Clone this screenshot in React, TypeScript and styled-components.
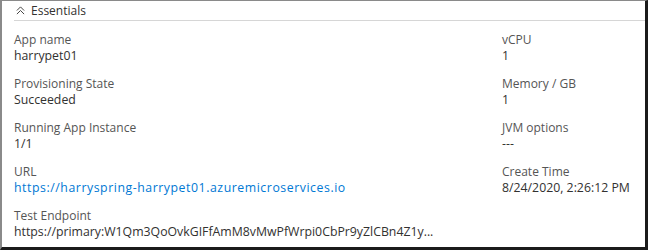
import React from "react";
import styled, { createGlobalStyle } from "styled-components";

const GlobalStyle = createGlobalStyle`
  html, body {
    margin: 0;
    padding: 0;
    background: #ffffff;
  }
  body {
    font-family: "Open Sans", "Noto Sans", "Liberation Sans", sans-serif;
  }
`;

const Panel = styled.div`
  box-sizing: border-box;
  width: 648px;
  height: 250px;
  border-top: 1px solid #8a8a8a;
  border-left: 2px solid #8a8a8a;
  border-right: 3px solid #1b1b1b;
  border-bottom: 3px solid #1b1b1b;
  background: #fff;
  overflow: hidden;
`;

const Header = styled.button`
  display: flex;
  align-items: center;
  gap: 6px;
  width: calc(100% - 12px);
  margin-left: 12px;
  height: 20px;
  padding: 0;
  background: none;
  border: none;
  border-bottom: 1px solid #d6d6d6;
  font: inherit;
  font-size: 12px;
  color: #323130;
  cursor: pointer;
  text-align: left;
`;

const Chevron = styled.svg`
  width: 9px;
  height: 9px;
  margin-left: 2px;
  flex: none;
`;

const Grid = styled.div`
  display: grid;
  grid-template-columns: 488px 1fr;
  padding: 11px 0 0 12px;
`;

const Column = styled.div`
  display: flex;
  flex-direction: column;
  gap: 12px;
`;

const Field = styled.div`
  display: flex;
  flex-direction: column;
`;

const Label = styled.div`
  font-size: 12px;
  line-height: 16px;
  color: #555555;
  white-space: nowrap;
`;

const Value = styled.div<{ $link?: boolean }>`
  font-size: 12.3px;
  line-height: 16px;
  color: ${(p) => (p.$link ? "#0078d4" : "#323130")};
  letter-spacing: ${(p) => (p.$link ? "0.55px" : "0")};
  white-space: nowrap;
`;

const left = [
  { label: "App name", value: "harrypet01" },
  { label: "Provisioning State", value: "Succeeded" },
  { label: "Running App Instance", value: "1/1" },
  {
    label: "URL",
    value: "https://harryspring-harrypet01.azuremicroservices.io",
    link: true,
  },
  {
    label: "Test Endpoint",
    value: "https://primary:W1Qm3QoOvkGIFfAmM8vMwPfWrpi0CbPr9yZlCBn4Z1y...",
  },
];

const right = [
  { label: "vCPU", value: "1" },
  { label: "Memory / GB", value: "1" },
  { label: "JVM options", value: "---" },
  { label: "Create Time", value: "8/24/2020, 2:26:12 PM" },
];

const App = () => {
  return (
    <>
      <GlobalStyle />
      <Panel>
        <Header>
          <Chevron viewBox="0 0 10 10" fill="none" stroke="#323130" strokeWidth="1">
            <path d="M1 5 L5 1 L9 5" />
            <path d="M1 9 L5 5 L9 9" />
          </Chevron>
          Essentials
        </Header>
        <Grid>
          <Column>
            {left.map((f) => (
              <Field key={f.label}>
                <Label>{f.label}</Label>
                <Value $link={f.link}>{f.value}</Value>
              </Field>
            ))}
          </Column>
          <Column>
            {right.map((f) => (
              <Field key={f.label}>
                <Label>{f.label}</Label>
                <Value>{f.value}</Value>
              </Field>
            ))}
          </Column>
        </Grid>
      </Panel>
    </>
  );
};

export default App;
